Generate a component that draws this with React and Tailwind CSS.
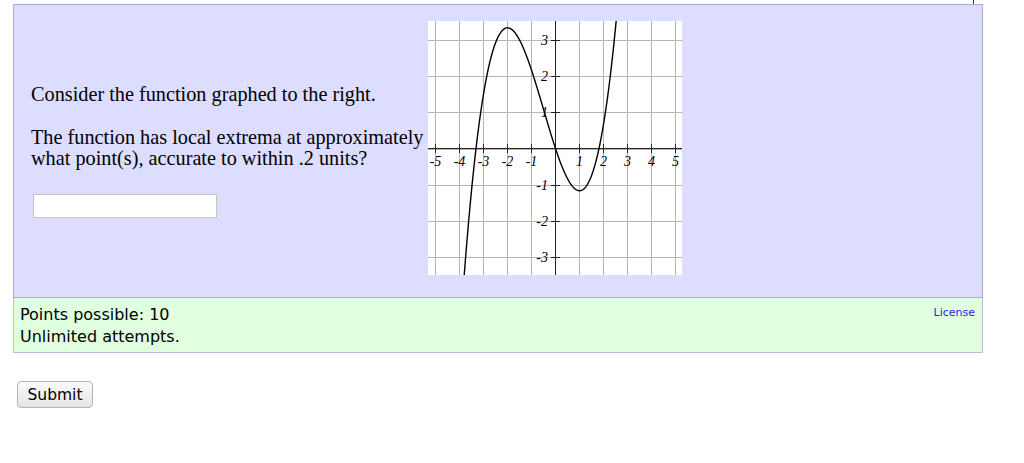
import React from "react";

const X = (u) => 127.5 + 24 * u;
const Y = (v) => 127.5 - 36.2 * v;
const f = (u) => (u * u * u) / 3 + (u * u) / 2 - 2 * u;

const curve = (() => {
  const pts = [];
  for (let u = -3.9; u <= 2.65; u += 0.02) {
    pts.push(`${X(u).toFixed(2)},${Y(f(u)).toFixed(2)}`);
  }
  return "M" + pts.join(" L");
})();

const xs = [-5, -4, -3, -2, -1, 0, 1, 2, 3, 4, 5];
const ys = [-3, -2, -1, 0, 1, 2, 3];

function Graph() {
  return (
    <svg width="254" height="254" viewBox="0 0 254 254" className="block shrink-0 bg-white">
      {xs.map((u) => (
        <line key={"gx" + u} x1={X(u)} y1="0" x2={X(u)} y2="254" stroke="#b4b4b4" strokeWidth="1" />
      ))}
      {ys.map((v) => (
        <line key={"gy" + v} x1="0" y1={Math.round(Y(v)) + 0.5} x2="254" y2={Math.round(Y(v)) + 0.5} stroke="#b4b4b4" strokeWidth="1" />
      ))}
      <line x1="0" y1="127.5" x2="254" y2="127.5" stroke="#222" strokeWidth="1" />
      <line x1="127.5" y1="0" x2="127.5" y2="254" stroke="#222" strokeWidth="1" />
      {xs.filter((u) => u !== 0).map((u) => (
        <line key={"tx" + u} x1={X(u)} y1="123" x2={X(u)} y2="132" stroke="#222" strokeWidth="1" />
      ))}
      {ys.filter((v) => v !== 0).map((v) => (
        <line key={"ty" + v} x1="123" y1={Math.round(Y(v)) + 0.5} x2="132" y2={Math.round(Y(v)) + 0.5} stroke="#222" strokeWidth="1" />
      ))}
      <g fontFamily="'Liberation Serif', serif" fontStyle="italic" fontSize="14" fill="#000">
        {xs.filter((u) => u !== 0).map((u) => (
          <text key={"lx" + u} x={X(u)} y="145" textAnchor="middle">{u}</text>
        ))}
        {ys.filter((v) => v !== 0).map((v) => (
          <text key={"ly" + v} x="120" y={Y(v) + 5} textAnchor="end">{v}</text>
        ))}
      </g>
      <path d={curve} fill="none" stroke="#000" strokeWidth="1.4" />
    </svg>
  );
}

export default function App() {
  return (
    <div className="min-h-screen bg-white">
      <div className="ml-[13px] w-[970px]">
        <div className="flex h-[4px] justify-end pr-[9px]">
          <div className="h-[4px] w-px bg-[#333]" />
        </div>

        <div className="flex items-center border border-[#ababdb] bg-[#ddddff] pt-[16px] pb-[22px]">
          <div className="w-[414px] shrink-0 pl-[17px] pt-[5px] font-['Liberation_Serif',serif] text-[20.25px] leading-[21px] text-black">
            <p className="mb-[22px] whitespace-nowrap">Consider the function graphed to the right.</p>
            <p className="whitespace-nowrap">
              The function has local extrema at approximately
              <br />
              what point(s), accurate to within .2 units?
            </p>
            <input
              type="text"
              className="mt-[25px] ml-[2px] block h-[24px] w-[184px] border border-[#c6c6c6] bg-white outline-none"
            />
          </div>
          <Graph />
        </div>

        <div className="flex justify-between border-x border-b border-[#bcbcdc] bg-[#dfffdf] pt-[6px] pb-[4px] pl-[6px] pr-[7px] font-['DejaVu_Sans',sans-serif]">
          <div className="text-[16px] leading-[22px] text-black">
            <div>Points possible: 10</div>
            <div>Unlimited attempts.</div>
          </div>
          <a href="#" className="pt-[2px] text-[11px] leading-[13px] text-[#2424e0]">
            License
          </a>
        </div>

        <button
          type="button"
          className="mt-[28px] ml-[4px] h-[27px] w-[76px] rounded-[4px] border border-[#b4b4b4] bg-gradient-to-b from-[#fbfbfb] to-[#e4e4e4] font-['DejaVu_Sans',sans-serif] text-[15.5px] leading-[20px] text-black"
        >
          Submit
        </button>
      </div>
    </div>
  );
}
